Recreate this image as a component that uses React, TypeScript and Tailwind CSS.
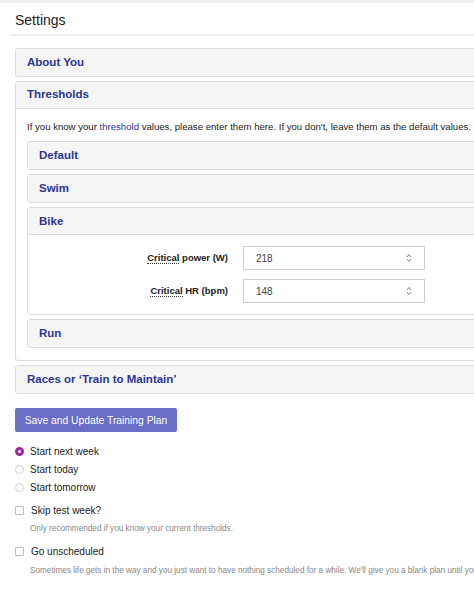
import React from "react";

const font = { fontFamily: '"Liberation Sans", Arial, Helvetica, sans-serif' };

function PanelHeader({ title, open }: { title: string; open?: boolean }) {
  return (
    <div
      className={`h-[27px] flex items-center px-[11px] bg-[#f5f5f5] text-[11.5px] font-bold text-[#2c3592] ${
        open ? "border-b border-[#dcdcdc]" : ""
      }`}
    >
      {title}
    </div>
  );
}

function Panel({ title, open, children }: { title: string; open?: boolean; children?: React.ReactNode }) {
  return (
    <div className="border border-[#dcdcdc] rounded-[3px] bg-white mb-[4px] overflow-hidden">
      <PanelHeader title={title} open={open} />
      {open && children}
    </div>
  );
}

function NumberField({ label, value }: { label: React.ReactNode; value: string }) {
  return (
    <div className="flex items-center">
      <div className="w-[215px] text-right pr-[15px] text-[9.5px] font-bold text-[#222]">{label}</div>
      <div className="w-[182px] h-[24px] border border-[#cfcfcf] flex items-center justify-between px-[12px] text-[10px] text-[#444]">
        <span>{value}</span>
        <svg width="6" height="10" viewBox="0 0 6 10" className="text-[#777]">
          <path d="M1 4 L3 1.5 L5 4 M1 6 L3 8.5 L5 6" fill="none" stroke="currentColor" strokeWidth="0.9" />
        </svg>
      </div>
    </div>
  );
}

function Radio({ label, checked }: { label: string; checked?: boolean }) {
  return (
    <label className="flex items-center gap-[6px] h-[18px] text-[10px] text-[#222]">
      {checked ? (
        <span className="w-[9px] h-[9px] rounded-full border-[3px] border-[#a0279f] bg-white" />
      ) : (
        <span className="w-[9px] h-[9px] rounded-full border border-[#cfcfcf] bg-white" />
      )}
      {label}
    </label>
  );
}

function Check({ label, help }: { label: string; help: string }) {
  return (
    <div className="mb-[7px]">
      <div className="flex items-center gap-[7px] h-[18px] text-[10px] text-[#222]">
        <span className="w-[9px] h-[9px] rounded-[1px] border border-[#bdbdbd] bg-white" />
        {label}
      </div>
      <div className="pl-[15px] text-[8.2px] text-[#888] whitespace-nowrap mt-[4px]">{help}</div>
    </div>
  );
}

export default function App() {
  return (
    <div className="w-full h-[595px] overflow-hidden bg-white" style={font}>
      <div className="w-[540px]">
        <div className="h-[3px] bg-[#f0f0f0]" />
        <div className="ml-[10px] border-b-2 border-[#eeeeee] h-[33px] flex items-center pl-[5px] pt-[3px] text-[14px] text-[#222]">
          Settings
        </div>
        <div className="pl-[15px] pt-[12px]">
          <Panel title="About You" />
          <Panel title="Thresholds" open>
            <div className="pt-[11px] px-[11px] pb-[8px]">
              <p className="text-[9.6px] text-[#222] mb-[7px] whitespace-nowrap">
                If you know your <span className="text-[#2c3592]">threshold</span> values, please enter them here.
                If you don't, leave them as the default values.
              </p>
              <Panel title="Default" />
              <Panel title="Swim" />
              <Panel title="Bike" open>
                <div className="pt-[11px] pb-[11px] flex flex-col gap-[9px]">
                  <NumberField
                    label={
                      <>
                        <span className="border-b border-dotted border-[#333]">Critical</span> power (W)
                      </>
                    }
                    value="218"
                  />
                  <NumberField
                    label={
                      <>
                        <span className="border-b border-dotted border-[#333]">Critical</span> HR (bpm)
                      </>
                    }
                    value="148"
                  />
                </div>
              </Panel>
              <Panel title="Run" />
            </div>
          </Panel>
          <Panel title="Races or ‘Train to Maintain’" />
          <button className="mt-[10px] h-[24px] w-[162px] rounded-[2px] bg-[#6a6ec6] text-white text-[10.3px]">
            Save and Update Training Plan
          </button>
          <div className="mt-[10px]">
            <Radio label="Start next week" checked />
            <Radio label="Start today" />
            <Radio label="Start tomorrow" />
          </div>
          <div className="mt-[5px]">
            <Check label="Skip test week?" help="Only recommended if you know your current thresholds." />
            <Check
              label="Go unscheduled"
              help="Sometimes life gets in the way and you just want to have nothing scheduled for a while. We'll give you a blank plan until you"
            />
          </div>
        </div>
      </div>
    </div>
  );
}
